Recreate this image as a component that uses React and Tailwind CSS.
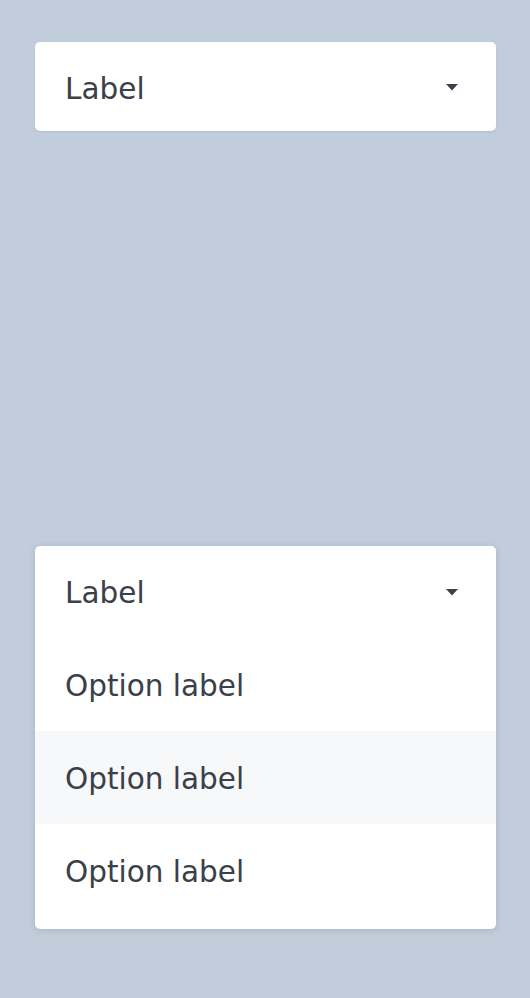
import React from "react";

const Caret = () => (
  <svg width="14" height="8" viewBox="0 0 14 8" className="shrink-0">
    <path d="M1 1h12L7 7.5z" fill="#3a4049" />
  </svg>
);

const SelectBox = ({ label, open, options = [] }) => (
  <div
    className={
      "w-[461px] bg-white rounded-[5px] " +
      (open ? "shadow-[0_1px_6px_rgba(60,80,110,0.18)] pb-[12px]" : "shadow-[0_1px_2px_rgba(60,80,110,0.12)]")
    }
  >
    <div
      className={
        "flex items-center justify-between pl-[30px] pr-[37px] " +
        (open ? "h-[92px]" : "h-[89px]")
      }
    >
      <span className={open ? "pt-[3px]" : "pt-[6px]"}>{label}</span>
      <Caret />
    </div>
    {open &&
      options.map((opt, i) => (
        <div
          key={i}
          className={
            "h-[93px] flex items-center pl-[30px] " +
            (i === 1 ? "bg-[#f7f8fa]" : "bg-white")
          }
        >
          <span className="pt-[4px]">{opt}</span>
        </div>
      ))}
  </div>
);

export default function App() {
  return (
    <div
      className="w-[530px] h-[998px] bg-[#c1cddb] pt-[42px] pl-[35px] text-[29.5px] text-[#3a4049]"
      style={{ fontFamily: '"DejaVu Sans", sans-serif' }}
    >
      <SelectBox label="Label" />
      <div className="h-[415px]" />
      <SelectBox
        label="Label"
        open
        options={["Option label", "Option label", "Option label"]}
      />
    </div>
  );
}
